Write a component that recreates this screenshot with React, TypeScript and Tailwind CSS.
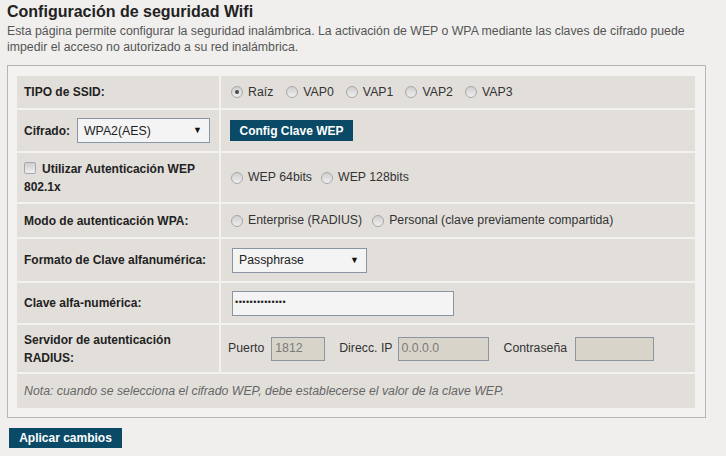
import React from "react";

function Radio({ label, checked = false, className = "" }: { label: string; checked?: boolean; className?: string }) {
  return (
    <span className={"inline-flex items-center " + className}>
      <span className="relative mr-[5px] inline-block h-[12px] w-[12px] rounded-full border border-[#a8a8a8] bg-gradient-to-b from-[#cfcfcf] to-[#efefef]">
        {checked && (
          <span className="absolute left-[3px] top-[3px] h-[4px] w-[4px] rounded-full bg-[#4a4a4a]" />
        )}
      </span>
      <span>{label}</span>
    </span>
  );
}

function Select({ value, w }: { value: string; w: string }) {
  return (
    <div className={"flex h-[25px] items-center justify-between border border-[#8a96a3] bg-[#f4f4f4] pl-[6px] pr-[7px] " + w}>
      <span className="text-[12.3px] text-[#222]">{value}</span>
      <span className="text-[9px] leading-none text-[#111]">▼</span>
    </div>
  );
}

function Disabled({ value, w }: { value: string; w: string }) {
  return (
    <div className={"flex h-[24px] items-center border border-[#8c95a0] bg-[#d9d4ca] pl-[3px] text-[12.3px] text-[#7a7a7a] " + w}>
      {value}
    </div>
  );
}

const label = "flex items-center bg-[#e2dfdb] pl-[7px] pr-[6px] text-[12px] font-bold leading-[18px] text-[#222]";
const value = "flex items-center bg-[#e2dfdb] text-[12.3px] text-[#333]";

export default function App() {
  return (
    <div
      className="min-h-[456px] w-[726px] bg-[#f0efed] pl-[7px] pt-[2px]"
      style={{ fontFamily: '"Liberation Sans", Arial, sans-serif' }}
    >
      <h1 className="text-[16px] font-bold leading-[20px] text-[#222]">Configuración de seguridad Wifi</h1>
      <p className="mt-[1px] text-[12.3px] leading-[16px] text-[#555]">
        Esta página permite configurar la seguridad inalámbrica. La activación de WEP o WPA mediante las claves de cifrado puede
        <br />
        impedir el acceso no autorizado a su red inalámbrica.
      </p>

      <div className="mt-[10px] w-[699px] border border-[#b9b5b1] bg-[#f3f2f0] px-[9px] pb-[9px] pt-[10px]">
        <div className="grid grid-cols-[202px_474px] grid-rows-[32px_41px_49px_33px_42px_40px_47px_34px] gap-[2px]">
          <div className={label}>TIPO de SSID:</div>
          <div className={value + " pl-[10px]"}>
            <Radio label="Raíz" checked />
            <Radio label="VAP0" className="ml-[13px]" />
            <Radio label="VAP1" className="ml-[12px]" />
            <Radio label="VAP2" className="ml-[12px]" />
            <Radio label="VAP3" className="ml-[12px]" />
          </div>

          <div className={label}>
            <span>Cifrado:</span>
            <span className="ml-[7px] font-normal">
              <Select value="WPA2(AES)" w="w-[133px]" />
            </span>
          </div>
          <div className={value + " pl-[9px]"}>
            <div className="flex h-[21px] w-[123px] items-center justify-center bg-[#0b4a67] text-[12px] font-bold text-white">
              Config Clave WEP
            </div>
          </div>

          <div className={label + " pr-[8px]"}>
            <div>
              <span className="mr-[6px] inline-block h-[12px] w-[12px] rounded-[2px] border border-[#a8a8a8] bg-gradient-to-b from-[#cfcfcf] to-[#efefef] align-[-1px]" />
              Utilizar Autenticación WEP 802.1x
            </div>
          </div>
          <div className={value + " pl-[10px]"}>
            <Radio label="WEP 64bits" />
            <Radio label="WEP 128bits" className="ml-[9px]" />
          </div>

          <div className={label}>Modo de autenticación WPA:</div>
          <div className={value + " pl-[10px]"}>
            <Radio label="Enterprise (RADIUS)" />
            <Radio label="Personal (clave previamente compartida)" className="ml-[10px]" />
          </div>

          <div className={label}>Formato de Clave alfanumérica:</div>
          <div className={value + " pl-[11px]"}>
            <Select value="Passphrase" w="w-[135px]" />
          </div>

          <div className={label}>Clave alfa-numérica:</div>
          <div className={value + " pl-[11px]"}>
            <div className="flex h-[25px] w-[222px] items-center border border-[#8a96a3] bg-[#f4f4f4] pl-[2px]">
              <span className="text-[9px] tracking-[0.5px] text-[#222]">••••••••••••••</span>
            </div>
          </div>

          <div className={label + " pr-[30px]"}>Servidor de autenticación RADIUS:</div>
          <div className={value + " pl-[7px]"}>
            <span>Puerto</span>
            <span className="ml-[7px]">
              <Disabled value="1812" w="w-[54px]" />
            </span>
            <span className="ml-[14px]">Direcc. IP</span>
            <span className="ml-[5px]">
              <Disabled value="0.0.0.0" w="w-[91px]" />
            </span>
            <span className="ml-[15px]">Contraseña</span>
            <span className="ml-[8px]">
              <Disabled value="" w="w-[79px]" />
            </span>
          </div>

          <div className={"col-span-2 flex items-center bg-[#e2dfdb] pl-[7px] text-[12.3px] italic text-[#666]"}>
            Nota: cuando se selecciona el cifrado WEP, debe establecerse el valor de la clave WEP.
          </div>
        </div>
      </div>

      <div className="ml-[2px] mt-[10px] flex h-[20px] w-[113px] items-center justify-center bg-[#0b4a67] text-[12px] font-bold text-white">
        Aplicar cambios
      </div>
    </div>
  );
}
